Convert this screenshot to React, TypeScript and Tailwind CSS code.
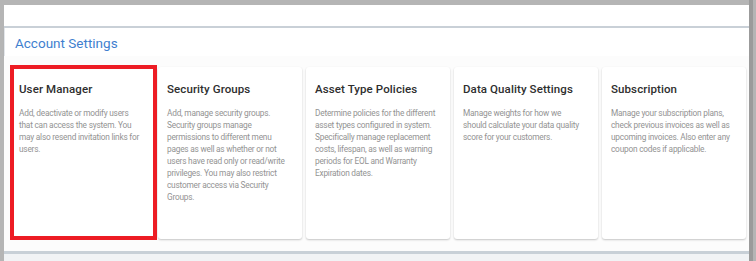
import React from 'react';

const cards = [
  {
    title: 'User Manager',
    lines: ['Add, deactivate or modify users', 'that can access the system. You', 'may also resend invitation links for', 'users.'],
  },
  {
    title: 'Security Groups',
    lines: [
      'Add, manage security groups.',
      'Security groups manage',
      'permissions to different menu',
      'pages as well as whether or not',
      'users have read only or read/write',
      'privileges. You may also restrict',
      'customer access via Security',
      'Groups.',
    ],
  },
  {
    title: 'Asset Type Policies',
    lines: [
      'Determine policies for the different',
      'asset types configured in system.',
      'Specifically manage replacement',
      'costs, lifespan, as well as warning',
      'periods for EOL and Warranty',
      'Expiration dates.',
    ],
  },
  {
    title: 'Data Quality Settings',
    lines: ['Manage weights for how we', 'should calculate your data quality', 'score for your customers.'],
  },
  {
    title: 'Subscription',
    lines: ['Manage your subscription plans,', 'check previous invoices as well as', 'upcoming invoices. Also enter any', 'coupon codes if applicable.'],
  },
];

function SettingCard({ title, lines, selected }: { title: string; lines: string[]; selected?: boolean }) {
  return (
    <div
      className={
        selected
          ? 'w-[147px] h-[175px] -mt-[2px] mr-[1px] bg-white border-4 border-[#ed1c24] px-[5px] pt-[12px]'
          : 'w-[144px] h-[172px] bg-white rounded-[3px] shadow-[0_1px_2px_rgba(0,0,0,0.22)] px-[9px] pt-[14px]'
      }
    >
      <h3 className="text-[11.5px] leading-[16px] font-medium text-[#2e2e2e] tracking-[0.1px]">{title}</h3>
      <p className="mt-[10px] text-[8.3px] leading-[12px] text-[#939393] tracking-[-0.22px] whitespace-nowrap">
        {lines.map((l) => (
          <span key={l} className="block">
            {l}
          </span>
        ))}
      </p>
    </div>
  );
}

export default function App() {
  return (
    <div className="w-[756px] h-[261px] bg-[#b5b5b5] flex overflow-hidden" style={{ fontFamily: 'Roboto, "Liberation Sans", sans-serif' }}>
      <div className="ml-[4px] mt-[5px] w-[745px] flex flex-col bg-white">
        <div className="h-[23px] bg-white border-b-2 border-[#c9d0d7]" />
        <div className="h-[28px] flex items-center pl-[10px] pt-[3px] bg-white border-l border-[#e3e6ea] shadow-[0_2px_1px_rgba(150,160,170,0.45)]">
          <h2 className="text-[13.5px] text-[#3f7fcf]">Account Settings</h2>
        </div>
        <div className="flex-1 bg-[#fcfcfc] pt-[11px] pl-[6px] flex flex-col">
          <div className="flex items-start">
            <SettingCard {...cards[0]} selected />
            <div className="flex gap-[4px]">
              {cards.slice(1).map((c) => (
                <SettingCard key={c.title} {...c} />
              ))}
            </div>
          </div>
          <div className="mt-[11px] -ml-[6px] h-[3px] bg-[#c8d0d7]" />
          <div className="flex-1 -ml-[6px] bg-[#f1f3f5]" />
        </div>
      </div>
      <div className="w-[4px] bg-[#9b9b9b]" />
    </div>
  );
}
